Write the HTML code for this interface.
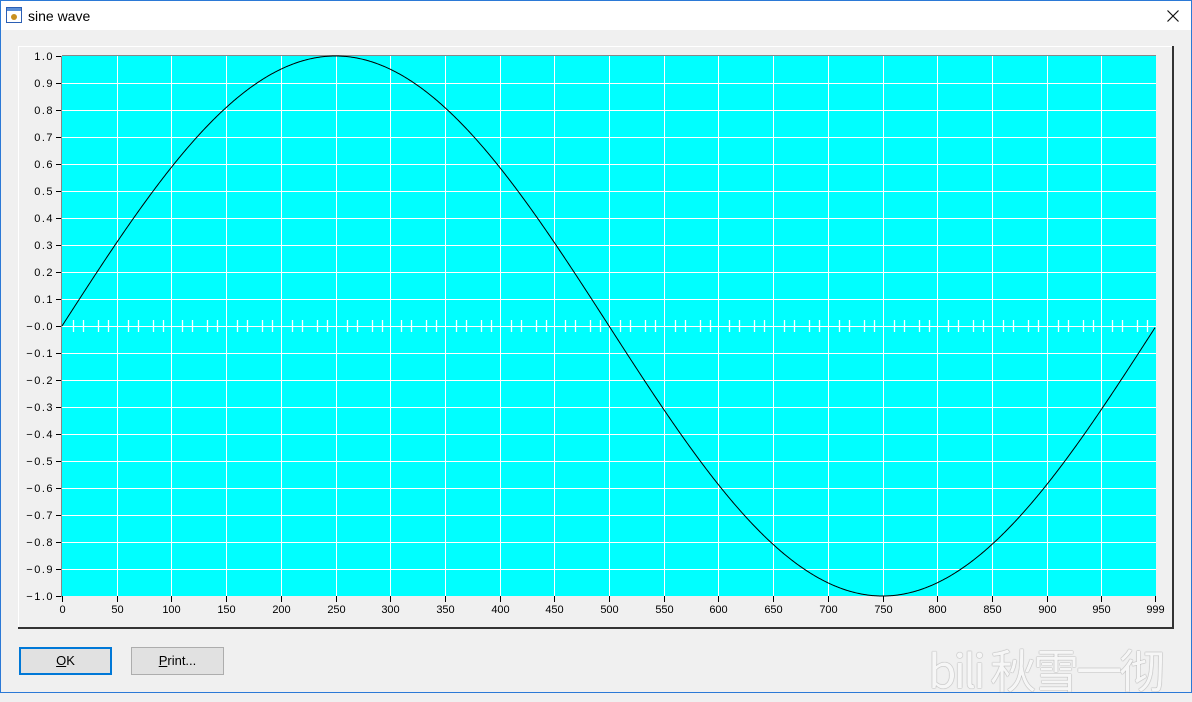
<!DOCTYPE html>
<html><head><meta charset="utf-8"><style>
html,body{margin:0;padding:0;}
body{width:1192px;height:693px;position:relative;background:#f0f0f0;font-family:"Liberation Sans",sans-serif;overflow:hidden;}
.win{position:absolute;left:0;top:0;width:1190px;height:691px;border:1px solid #2b79d6;}
.title{position:absolute;left:0;top:0;width:1190px;height:29px;background:#fff;}
.title span{position:absolute;left:27px;top:7px;font-size:14px;color:#000;}
.btn{position:absolute;top:647px;height:26px;width:91px;background:#e1e1e1;border:1px solid #adadad;font-size:13px;text-align:center;line-height:26px;color:#000;}
.ok{left:19px;border:2px solid #0078d7;width:89px;height:24px;line-height:24px;}
.wm{position:absolute;left:928px;top:636px;font-size:46px;color:#f6f6f6;text-shadow:0 0 1px #999,0 0 1px #999;font-family:"Noto Sans CJK SC",sans-serif;letter-spacing:-3px;white-space:nowrap;}
</style></head><body>
<div class="win">
<div class="title">
<svg style="position:absolute;left:5px;top:6px" width="17" height="17"><rect x="0.5" y="0.5" width="15" height="15" fill="#fff" stroke="#2b5fb4"/><rect x="1" y="1" width="14" height="3" fill="#5a8fd8"/><circle cx="8" cy="10" r="3" fill="#c89020"/></svg>
<span>sine wave</span>
<svg style="position:absolute;left:1166px;top:9px" width="12" height="12"><path d="M0.5 0.5L11.5 11.5M11.5 0.5L0.5 11.5" stroke="#111" stroke-width="1.2"/></svg>
</div>
</div>
<svg id="c" style="position:absolute;left:0;top:0" width="1192" height="693" font-family="Liberation Sans, sans-serif" font-size="11"></svg>
<div class="btn ok"><u>O</u>K</div>
<div class="btn" style="left:131px"><u>P</u>rint...</div>
<div class="wm">bili 秋雪一彻</div>
<script>
var s='';
s+='<line x1="18" y1="46.5" x2="1172" y2="46.5" stroke="#fff"/><line x1="18.5" y1="46" x2="18.5" y2="628" stroke="#fff"/>';
s+='<line x1="18" y1="628" x2="1174" y2="628" stroke="#333" stroke-width="2"/><line x1="1173" y1="46" x2="1173" y2="629" stroke="#333" stroke-width="2"/>';
var L=62,R=1156,T=56,B=596,Z=326;
s+='<rect x="'+L+'" y="'+T+'" width="'+(R-L)+'" height="'+(B-T)+'" fill="#00ffff"/>';
var k=(R-L-1)/999;
for(var i=0;i<=20;i++){var y=T+i*27;
 if(i>0&&i<20)s+='<line x1="'+L+'" y1="'+(y+.5)+'" x2="'+R+'" y2="'+(y+.5)+'" stroke="#fff"/>';
 s+='<line x1="'+(L-6)+'" y1="'+(y+.5)+'" x2="'+L+'" y2="'+(y+.5)+'" stroke="#000"/>';
 var v=(10-i)/10;var t=(i>=10?'−':'')+Math.abs(v).toFixed(1);
 s+='<text x="'+(L-8)+'" y="'+(y+4)+'" text-anchor="end" letter-spacing="1.5">'+t+'</text>';}
for(var j=0;j<=20;j++){var u=j==20?999:j*50;var x=Math.round(L+u*k)+.5;
 if(j>0&&j<20)s+='<line x1="'+x+'" y1="'+T+'" x2="'+x+'" y2="'+B+'" stroke="#fff"/>';
 s+='<line x1="'+x+'" y1="'+B+'" x2="'+x+'" y2="'+(B+6)+'" stroke="#000"/>';
 s+='<text x="'+x+'" y="'+(B+17)+'" text-anchor="middle">'+u+'</text>';
 if(j<20){[11,21,36,46].forEach(function(o){var xx=Math.round(L+u*k+o)+.5;if(xx<R)s+='<line x1="'+xx+'" y1="'+(Z-6)+'" x2="'+xx+'" y2="'+(Z+6)+'" stroke="#fff" stroke-width="1.3"/>';});}}
s+='<line x1="'+L+'" y1="'+(Z+.5)+'" x2="'+R+'" y2="'+(Z+.5)+'" stroke="#fff"/>';
s+='<line x1="'+(L-.5)+'" y1="'+T+'" x2="'+(L-.5)+'" y2="'+(B+1)+'" stroke="#888"/><line x1="'+L+'" y1="'+(T-.5)+'" x2="'+R+'" y2="'+(T-.5)+'" stroke="#888"/>';
var d='';for(var n=0;n<1000;n++){d+=(n?'L':'M')+(L+n*k).toFixed(2)+' '+(Z-270*Math.sin(2*Math.PI*n/1000)).toFixed(2);}
s+='<path d="'+d+'" fill="none" stroke="#000" stroke-width="1"/>';
document.getElementById('c').innerHTML=s;
</script>
</body></html>
